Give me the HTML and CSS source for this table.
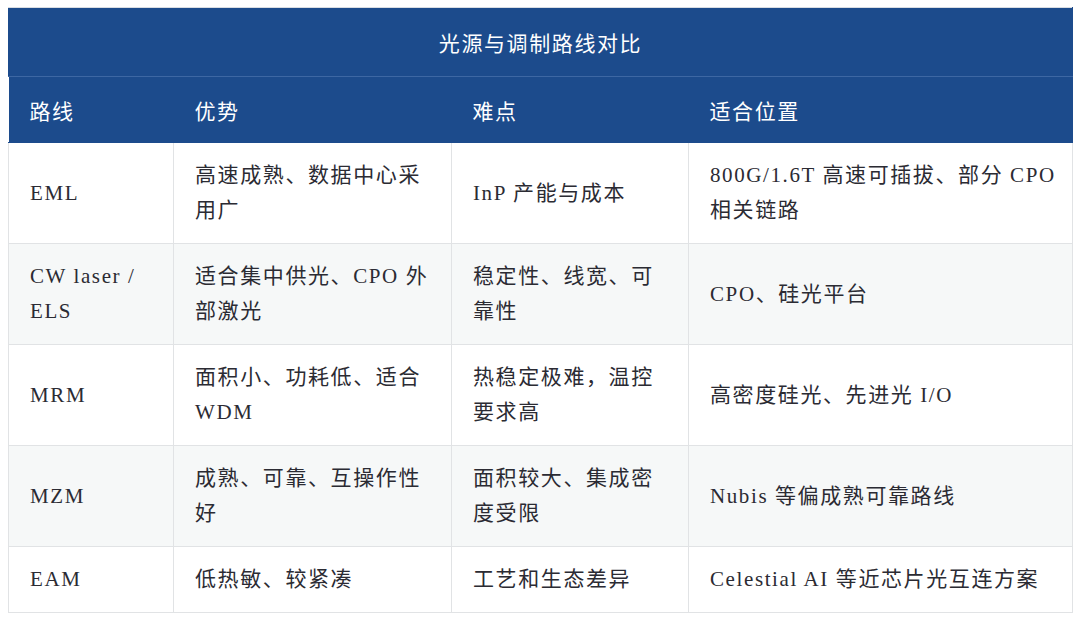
FILE: index.html
```html
<!DOCTYPE html>
<html lang="zh">
<head>
<meta charset="utf-8">
<title>光源与调制路线对比</title>
<link rel="stylesheet" href="styles.css">
</head>
<body>
<table class="cmp">
  <colgroup>
    <col class="c1"><col class="c2"><col class="c3"><col class="c4">
  </colgroup>
  <thead>
    <tr class="title-row"><th colspan="4">光源与调制路线对比</th></tr>
    <tr class="head-row"><th>路线</th><th>优势</th><th>难点</th><th>适合位置</th></tr>
  </thead>
  <tbody>
    <tr><td>EML</td><td>高速成熟、数据中心采<br>用广</td><td>InP 产能与成本</td><td>800G/1.6T 高速可插拔、部分 CPO<br>相关链路</td></tr>
    <tr class="alt"><td>CW laser /<br>ELS</td><td>适合集中供光、CPO 外<br>部激光</td><td>稳定性、线宽、可<br>靠性</td><td>CPO、硅光平台</td></tr>
    <tr><td>MRM</td><td>面积小、功耗低、适合<br>WDM</td><td>热稳定极难，温控<br>要求高</td><td>高密度硅光、先进光 I/O</td></tr>
    <tr class="alt"><td>MZM</td><td>成熟、可靠、互操作性<br>好</td><td>面积较大、集成密<br>度受限</td><td>Nubis 等偏成熟可靠路线</td></tr>
    <tr><td>EAM</td><td>低热敏、较紧凑</td><td>工艺和生态差异</td><td>Celestial AI 等近芯片光互连方案</td></tr>
  </tbody>
</table>
</body>
</html>
```

FILE: styles.css
```css
html, body {
  margin: 0;
  padding: 0;
  background: #ffffff;
}
body {
  padding: 7px 8px 0 8px;
  font-family: "Liberation Serif", "Times New Roman", "DejaVu Serif", "Noto Sans CJK SC", serif;
  color: #2b2b33;
}
.cmp {
  width: 1064px;
  border-collapse: collapse;
  table-layout: fixed;
  font-size: 21px;
  letter-spacing: 1.6px;
}
.c1 { width: 165px; }
.c2 { width: 278px; }
.c3 { width: 237px; }
.c4 { width: 384px; }

.title-row th {
  background: #1c4b8c;
  color: #ffffff;
  font-weight: normal;
  text-align: center;
  height: 68px;
  padding: 0;
  border: 1px solid #1c4b8c;
  border-top: 1px solid #d9dde3;
  border-bottom: 1px solid #3d67a3;
}
.head-row th {
  background: #1c4b8c;
  color: #ffffff;
  font-weight: normal;
  text-align: left;
  height: 65px;
  padding: 0 21px;
  border: none;
  border-bottom: 1px solid #1c4b8c;
}
.cmp td {
  padding: 15px 6px 15px 21px;
  line-height: 35px;
  border: 1px solid #e1e3e5;
  vertical-align: middle;
  background: #ffffff;
}
.cmp tr.alt td {
  background: #f6f8f8;
}
```
